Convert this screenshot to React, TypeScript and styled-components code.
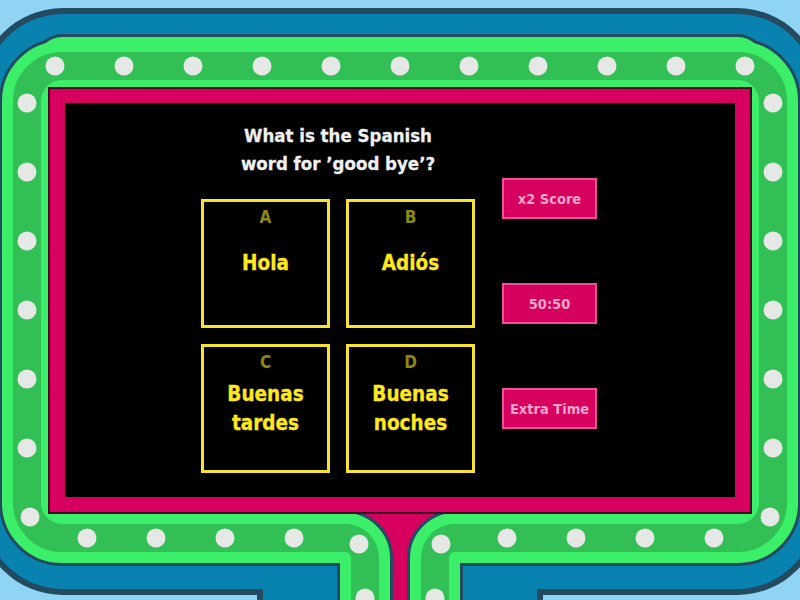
import React from "react";
import styled, { createGlobalStyle } from "styled-components";

const C = {
  sky: "#8fd4f2",
  outline: "#234a60",
  blue: "#0882ae",
  bright: "#3cef69",
  green: "#32bf55",
  dot: "#e6e8e6",
  magenta: "#d8005f",
};

const GlobalStyle = createGlobalStyle`
  html, body { margin: 0; padding: 0; background: ${C.sky}; }
  body {
    font-family: "Liberation Sans Narrow", "DejaVu Sans Condensed", "Liberation Sans", sans-serif;
  }
`;

const Stage = styled.div`
  position: relative;
  width: 800px;
  height: 600px;
  overflow: hidden;
  background: ${C.sky};
`;

const Backdrop = styled.svg`
  position: absolute;
  inset: 0;
  width: 800px;
  height: 600px;
  display: block;
`;

const Screen = styled.main`
  position: relative;
  z-index: 1;
  box-sizing: border-box;
  margin: 89px 0 0 50px;
  width: 700px;
  height: 423px;
  border: solid ${C.magenta};
  border-width: 14px 15px 15px 15px;
  box-shadow: 0 0 0 2px #3a1024;
  background: #000;
  display: flex;
  align-items: flex-start;
`;

const QuizColumn = styled.section`
  margin-left: 136px;
  width: 274px;
  display: flex;
  flex-direction: column;
  align-items: center;
`;

const Question = styled.h1`
  margin: 19px 0 0;
  font-size: 18.5px;
  line-height: 28px;
  font-weight: 700;
  color: #f0f0f0;
  text-align: center;
  white-space: nowrap;
  -webkit-text-stroke: 0.3px #f0f0f0;
`;

const Grid = styled.div`
  margin-top: 21px;
  display: grid;
  grid-template-columns: repeat(2, 129px);
  grid-auto-rows: 129px;
  gap: 16px;
`;

const AnswerBox = styled.div`
  box-sizing: border-box;
  border: 3px solid #f6e52c;
  display: flex;
  flex-direction: column;
  align-items: center;
  padding-top: 4px;
`;

const Letter = styled.div`
  font-size: 17px;
  line-height: 22px;
  font-weight: 700;
  color: #8e8810;
`;

const AnswerText = styled.div`
  height: 71px;
  display: flex;
  align-items: center;
  justify-content: center;
  text-align: center;
  color: #ffe81c;
  font-size: 20.5px;
  line-height: 29px;
  font-weight: 700;
  -webkit-text-stroke: 0.3px #ffe81c;
`;

const PowerColumn = styled.aside`
  margin-left: 27px;
  padding-top: 75px;
  display: flex;
  flex-direction: column;
  gap: 64px;
`;

const PowerButton = styled.button`
  box-sizing: border-box;
  width: 95px;
  height: 41px;
  padding: 0;
  background: #d6005f;
  border: 2px solid #f0509a;
  color: #f9a6ca;
  font-family: inherit;
  font-weight: 700;
  font-size: 14.5px;
  display: flex;
  align-items: center;
  justify-content: center;
`;

const ring =
  "M 365 620 L 365 558 A 20 20 0 0 0 345 538 L 62 538 A 35 35 0 0 1 27 503 L 27 101 A 35 35 0 0 1 62 66 L 738 66 A 35 35 0 0 1 773 101 L 773 503 A 35 35 0 0 1 738 538 L 455 538 A 20 20 0 0 0 435 558 L 435 620";
const topBand = "M 62 62 L 738 62";

const dots: [number, number][] = [];
for (let k = 0; k <= 10; k++) dots.push([55 + 69 * k, 66]);
[103, 172, 241, 310, 379, 448].forEach((y) => {
  dots.push([27, y]);
  dots.push([773, y]);
});
dots.push([30, 517], [770, 517]);
[87, 156, 225, 294, 507, 576, 645, 714].forEach((x) => dots.push([x, 538]));
dots.push([359, 544], [441, 544], [365, 598], [435, 598]);

const StageArt = () => (
  <Backdrop viewBox="0 0 800 600" aria-hidden="true">
    <rect width="800" height="600" fill={C.sky} />
    <rect x="-22" y="8" width="844" height="587" rx="85" fill={C.outline} />
    <rect x="257" y="540" width="286" height="70" fill={C.outline} />
    <rect x="-16" y="14" width="832" height="575" rx="79" fill={C.blue} />
    <rect x="263" y="540" width="274" height="70" fill={C.blue} />
    <rect x="346" y="480" width="108" height="130" fill={C.magenta} />
    <g fill="none" strokeLinejoin="round">
      <path d={topBand} stroke={C.outline} strokeWidth="56" strokeLinecap="round" />
      <path d={ring} stroke={C.outline} strokeWidth="56" />
      <path d={topBand} stroke={C.bright} strokeWidth="50" strokeLinecap="round" />
      <path d={ring} stroke={C.bright} strokeWidth="50" />
      <path d={ring} stroke={C.green} strokeWidth="28" />
    </g>
    {dots.map(([x, y], i) => (
      <circle key={i} cx={x} cy={y} r="9.5" fill={C.dot} />
    ))}
  </Backdrop>
);

const answers = [
  { letter: "A", text: "Hola" },
  { letter: "B", text: "Adiós" },
  { letter: "C", text: "Buenas tardes" },
  { letter: "D", text: "Buenas noches" },
];

const powers = ["x2 Score", "50:50", "Extra Time"];

export default function App() {
  return (
    <>
      <GlobalStyle />
      <Stage>
        <StageArt />
        <Screen>
          <QuizColumn>
            <Question>
              What is the Spanish
              <br />
              word for ’good bye’?
            </Question>
            <Grid>
              {answers.map((a) => (
                <AnswerBox key={a.letter}>
                  <Letter>{a.letter}</Letter>
                  <AnswerText>
                    {a.text.includes(" ") ? (
                      <span>
                        {a.text.split(" ")[0]}
                        <br />
                        {a.text.split(" ")[1]}
                      </span>
                    ) : (
                      a.text
                    )}
                  </AnswerText>
                </AnswerBox>
              ))}
            </Grid>
          </QuizColumn>
          <PowerColumn>
            {powers.map((p) => (
              <PowerButton key={p}>{p}</PowerButton>
            ))}
          </PowerColumn>
        </Screen>
      </Stage>
    </>
  );
}
